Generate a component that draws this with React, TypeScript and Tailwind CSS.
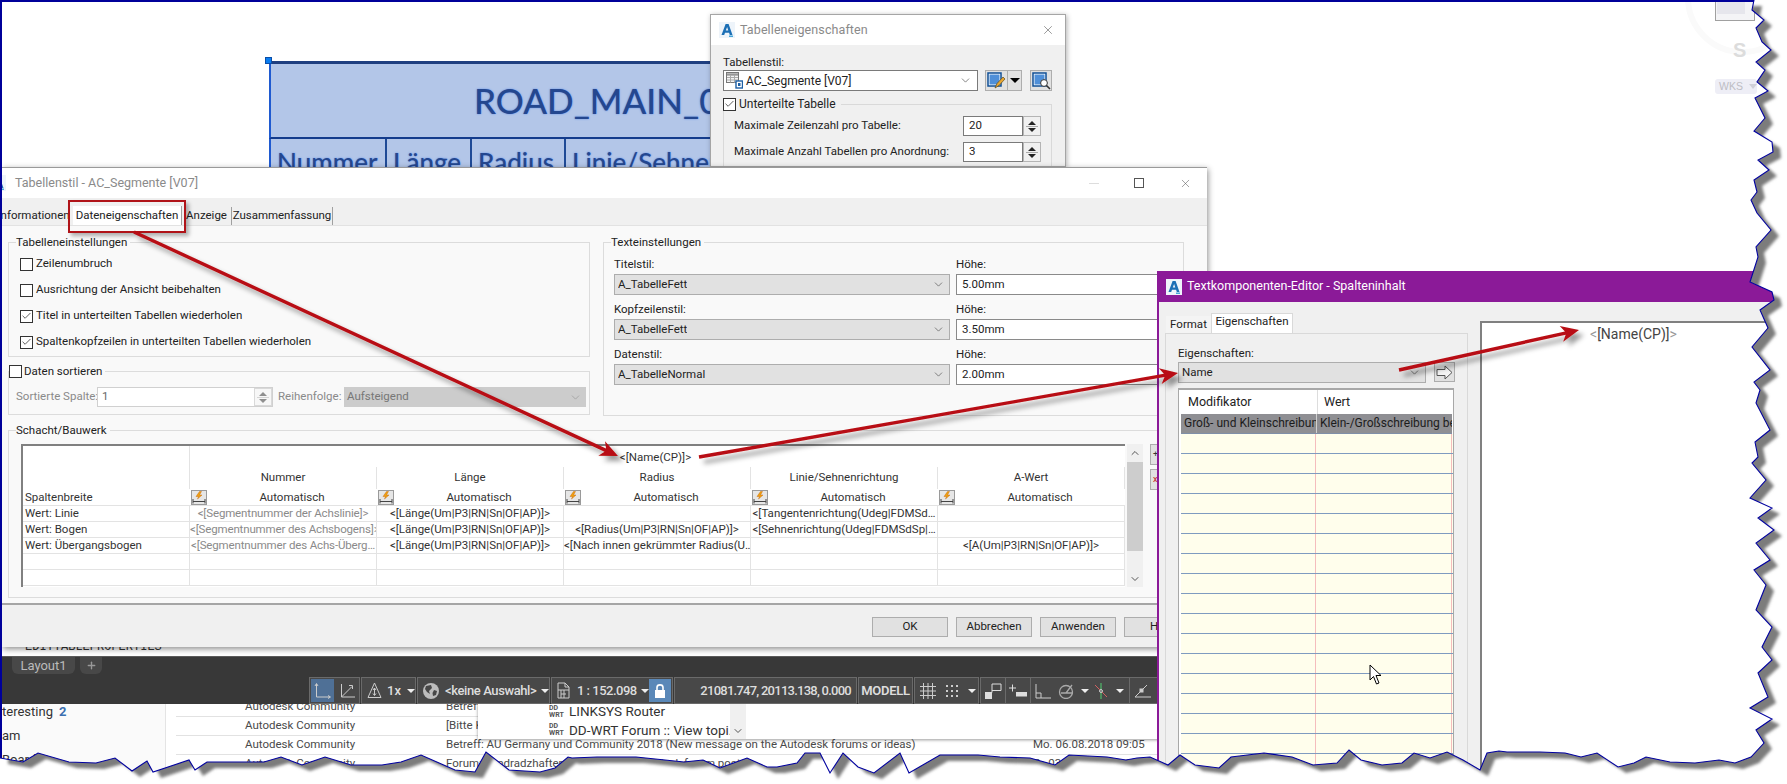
import { Check, ChevronDown, ChevronUp, Plus, X } from "lucide-react";
import type { ReactNode } from "react";

// Torn-paper edge, points read off the screenshot
const rightEdge: [number, number][] = [
  [1754, 0], [1752, 10], [1764, 20], [1756, 28], [1762, 42], [1771, 50], [1756, 62], [1765, 70], [1757, 82], [1768, 91],
  [1755, 98], [1765, 118], [1754, 131], [1772, 142], [1773, 152], [1758, 160], [1769, 170], [1754, 180], [1757, 192],
  [1751, 200], [1757, 213], [1771, 230], [1756, 247], [1758, 257], [1750, 282], [1772, 292], [1774, 300], [1760, 310],
  [1768, 328], [1752, 347], [1770, 370], [1754, 382], [1760, 390], [1756, 403], [1770, 430], [1755, 442], [1758, 457],
  [1752, 463], [1766, 480], [1750, 498], [1772, 508], [1758, 518], [1774, 530], [1756, 543], [1770, 560], [1754, 570],
  [1766, 585], [1760, 600], [1756, 610], [1772, 627], [1762, 647], [1772, 660], [1758, 673], [1768, 697], [1750, 708],
  [1772, 719], [1756, 730], [1764, 743], [1751, 757],
];

const bottomEdge: [number, number][] = [
  [1735, 763], [1719, 760], [1695, 763], [1670, 762], [1646, 757], [1634, 763], [1618, 767], [1597, 753], [1581, 757],
  [1565, 753], [1540, 752], [1507, 752], [1499, 751], [1487, 753], [1480, 770], [1463, 760], [1447, 752], [1430, 758],
  [1414, 753], [1402, 763], [1382, 765], [1361, 760], [1349, 750], [1337, 763], [1313, 765], [1292, 757], [1264, 753],
  [1231, 757], [1219, 768], [1195, 765], [1180, 755], [1168, 765], [1150, 757], [1137, 758], [1126, 760], [1107, 757],
  [1069, 755], [1055, 765], [1030, 758], [1000, 757], [978, 755], [940, 755], [909, 773], [900, 753],
  [874, 773], [858, 767], [843, 753], [830, 773], [820, 753], [805, 753], [797, 763], [777, 767], [767, 767], [747, 758],
  [720, 768], [703, 760], [684, 762], [665, 760], [636, 757], [597, 757], [572, 758], [568, 757], [555, 768], [540, 772],
  [509, 770], [486, 752], [475, 772], [455, 770], [421, 755], [401, 762], [382, 765], [351, 765], [325, 757], [302, 765],
  [281, 757], [264, 762], [237, 762], [207, 762], [195, 770], [189, 760], [153, 772], [147, 761], [132, 771], [115, 758],
  [96, 763], [69, 762], [38, 753], [23, 762], [0, 758],
];

const edge = [...rightEdge, ...bottomEdge].map(([x, y]) => `${x} ${y}`).join("L");
const paperPath = `M0 0L${edge}Z`;
const maskPath = `M0 0H1787V784H0Z${paperPath}`;

function TornEdge() {
  return (
    <svg className="absolute left-0 top-0 pointer-events-none" width="1787" height="784" viewBox="0 0 1787 784">
      <defs>
        <clipPath id="outside">
          <path d={maskPath} clipRule="evenodd" />
        </clipPath>
        <filter id="soft">
          <feGaussianBlur stdDeviation="1.6" />
        </filter>
      </defs>
      <path d={maskPath} fill="#fff" fillRule="evenodd" />
      <g clipPath="url(#outside)">
        <path d={paperPath} transform="translate(8 6)" fill="#7c7c7c" filter="url(#soft)" />
      </g>
      <path d={paperPath} fill="none" stroke="#0000a0" strokeWidth="1.1" />
      <path d="M0 1H1754M1 0V758" fill="none" stroke="#00009a" strokeWidth="2" />
    </svg>
  );
}

function arrowPath(x1: number, y1: number, x2: number, y2: number) {
  const len = Math.hypot(x2 - x1, y2 - y1);
  const ux = (x2 - x1) / len;
  const uy = (y2 - y1) / len;
  const at = (back: number, side: number) => `${x2 - ux * back - uy * side} ${y2 - uy * back + ux * side}`;
  const s = `${x1 - uy * 1.7} ${y1 + ux * 1.7}`;
  const e = `${x1 + uy * 1.7} ${y1 - ux * 1.7}`;
  return `M${s}L${at(14, 1.7)}L${at(18, 8)}L${at(0, 0)}L${at(18, -8)}L${at(14, -1.7)}L${e}Z`;
}

function Arrows() {
  return (
    <svg className="absolute left-0 top-0 pointer-events-none" width="1787" height="784" viewBox="0 0 1787 784">
      <defs>
        <filter id="arrowShadow" x="-10%" y="-10%" width="120%" height="130%">
          <feDropShadow dx="5" dy="5" stdDeviation="2.5" floodColor="#000" floodOpacity="0.4" />
        </filter>
      </defs>
      <g fill="#b80d12" filter="url(#arrowShadow)">
        <path d={arrowPath(134, 232, 618, 456)} />
        <path d={arrowPath(699, 457, 1178, 373)} />
        <path d={arrowPath(1399, 370, 1579, 330)} />
      </g>
    </svg>
  );
}

function AutodeskIcon() {
  return (
    <svg width="16" height="16" viewBox="0 0 16 16" className="shrink-0">
      <rect width="16" height="16" fill="#eef4fa" />
      <path d="M2.5 13L6.6 2H9.6L13.5 13H10.8L10.1 10.8H6L5.2 13ZM6.8 8.6H9.3L8.1 4.9Z" fill="#1c6fb5" fillRule="evenodd" />
      <rect x="10" y="13.5" width="4" height="1.5" fill="#48a6d8" />
    </svg>
  );
}

function Checkbox({ checked = false }: { checked?: boolean }) {
  return (
    <span className="flex size-[13px] shrink-0 items-center justify-center border border-[#333] bg-white">
      {checked && <Check size={12} strokeWidth={1.6} className="text-[#222]" />}
    </span>
  );
}

function GroupBox({ title, className, children }: { title?: ReactNode; className: string; children: ReactNode }) {
  return (
    <div className={`relative border border-[#dcdcdc] ${className}`}>
      {title && <div className="absolute -top-[9px] left-[7px] bg-[#f9f9f9] pr-[3px] leading-[16px]">{title}</div>}
      {children}
    </div>
  );
}

function ComboBox({ value, className }: { value: string; className: string }) {
  return (
    <div className={`flex h-[21px] items-center justify-between border border-[#adadad] bg-[#e1e1e1] pl-[3px] pr-[4px] ${className}`}>
      <span className="truncate">{value}</span>
      <ChevronDown size={13} strokeWidth={1.3} className="shrink-0 text-[#555]" />
    </div>
  );
}

function Spinner() {
  return (
    <div className="flex h-full w-[18px] flex-col items-center justify-center gap-[1px] border border-[#b4b4b4] bg-[#f0f0f0]">
      <span className="h-0 w-0 border-x-[4px] border-b-[4px] border-x-transparent border-b-[#222]" />
      <span className="h-[1px] w-[12px] bg-[#aaa]" />
      <span className="h-0 w-0 border-x-[4px] border-t-[4px] border-x-transparent border-t-[#222]" />
    </div>
  );
}

function TableIcon() {
  return (
    <svg width="17" height="17" viewBox="0 0 17 17" className="shrink-0">
      <rect x="0.5" y="0.5" width="12" height="10" fill="#f4f4f4" stroke="#777" />
      <rect x="0.5" y="0.5" width="12" height="2.5" fill="#b8b8b8" stroke="#777" />
      <path d="M4.5 3V10.5M8.5 3V10.5M1 5.5H12M1 8H12" stroke="#aaa" />
      <rect x="10" y="9" width="6.5" height="7" fill="#fff" stroke="#1c5fa5" strokeWidth="1.4" />
      <rect x="12" y="11" width="2.5" height="3" fill="#1c5fa5" />
    </svg>
  );
}

function StyleEditIcon() {
  return (
    <svg width="19" height="18" viewBox="0 0 19 18">
      <rect x="1" y="1" width="13" height="13" fill="#fff" stroke="#0f4f96" strokeWidth="1.5" />
      <rect x="2.5" y="2.5" width="10" height="10" fill="#4f8fd8" />
      <path d="M8 16L10 11.5L16 5L18 7L12 13.5Z" fill="#e8a632" stroke="#5a4a20" strokeWidth="0.7" />
    </svg>
  );
}

function StylePreviewIcon() {
  return (
    <svg width="19" height="18" viewBox="0 0 19 18">
      <rect x="1" y="1" width="13" height="13" fill="#fff" stroke="#0f4f96" strokeWidth="1.5" />
      <rect x="2.5" y="2.5" width="10" height="10" fill="#4f8fd8" />
      <circle cx="12" cy="11" r="3.4" fill="#fff" stroke="#333" />
      <path d="M14.5 13.5L18 17" stroke="#333" strokeWidth="1.6" />
    </svg>
  );
}

function WidthIcon() {
  return (
    <div className="flex h-[15px] w-[16px] shrink-0 items-center justify-center border border-[#9a9a9a] bg-[#e6e6e6]">
      <svg width="14" height="13" viewBox="0 0 14 13">
        <path d="M7.5 0.5L4 5.5H6.5L5.5 8L10 4H7.5L9.5 0.5Z" fill="#f0a010" stroke="#c05a00" strokeWidth="0.4" />
        <path d="M1 8V12.5M13 8V12.5M1 10.5H13" stroke="#444" />
      </svg>
    </div>
  );
}

function Tab({ label, active, className }: { label: string; active?: boolean; className: string }) {
  return (
    <div className={`flex h-[18px] items-center justify-center border-r border-[#a0a0a0] whitespace-nowrap ${active ? "bg-white h-[19px]" : ""} ${className}`}>
      {label}
    </div>
  );
}

const rows = [
  ["Wert: Linie", "<[Segmentnummer der Achslinie]>", "<[Länge(Um|P3|RN|Sn|OF|AP)]>", "", "<[Tangentenrichtung(Udeg|FDMSd…", ""],
  ["Wert: Bogen", "<[Segmentnummer des Achsbogens]>", "<[Länge(Um|P3|RN|Sn|OF|AP)]>", "<[Radius(Um|P3|RN|Sn|OF|AP)]>", "<[Sehnenrichtung(Udeg|FDMSdSp|…", ""],
  ["Wert: Übergangsbogen", "<[Segmentnummer des Achs-Überg…", "<[Länge(Um|P3|RN|Sn|OF|AP)]>", "<[Nach innen gekrümmter Radius(U…", "", "<[A(Um|P3|RN|Sn|OF|AP)]>"],
  ["", "", "", "", "", ""],
  ["", "", "", "", "", ""],
];

const columns = ["Nummer", "Länge", "Radius", "Linie/Sehnenrichtung", "A-Wert"];

function ColumnTable() {
  return (
    <div className="w-[1104px] border-l-2 border-t-2 border-[#808080] bg-white text-[#333]">
      <div className="flex h-[21px]">
        <div className="w-[167px] border-r border-[#e3e3e3]" />
        <div className="flex-1 pt-[3px] pr-[4px] text-center">&lt;[Name(CP)]&gt;</div>
      </div>
      <div className="grid h-[22px] grid-cols-[167px_repeat(5,187px)]">
        <div className="border-r border-[#e3e3e3]" />
        {columns.map((c) => (
          <div key={c} className="border-r border-[#e3e3e3] text-center leading-[21px]">{c}</div>
        ))}
      </div>
      <div className="grid h-[17px] grid-cols-[167px_repeat(5,187px)] border-b border-[#e3e3e3]">
        <div className="pl-[2px] leading-[16px]">Spaltenbreite</div>
        {columns.map((c) => (
          <div key={c} className="flex items-center pl-[1px]">
            <WidthIcon />
            <span className="flex-1 text-center">Automatisch</span>
          </div>
        ))}
      </div>
      {rows.map((row, i) => (
        <div key={i} className="grid h-[16px] grid-cols-[167px_repeat(5,187px)] border-b border-[#e3e3e3] leading-[15px]">
          {row.map((cell, j) => (
            <div
              key={j}
              className={`overflow-hidden whitespace-nowrap border-r border-[#e3e3e3] ${j === 0 ? "pl-[2px]" : "text-center"} ${j === 1 ? "text-[#8a8a8a] tracking-[-0.15px]" : ""}`}
            >
              {cell}
            </div>
          ))}
        </div>
      ))}
    </div>
  );
}

function MainDialog() {
  return (
    <div className="absolute left-[2px] top-[167px] flex h-[480px] w-[1205px] flex-col overflow-hidden border-t border-[#9a9a9a] bg-white shadow-[1px_2px_6px_rgba(0,0,0,0.45)]">
      <div className="flex h-[30px] shrink-0 items-center bg-white">
        <div className="-ml-[12px] mr-[9px]"><AutodeskIcon /></div>
        <span className="text-[12.5px] text-[#8a8a8a]">Tabellenstil - AC_Segmente [V07]</span>
        <div className="ml-auto flex items-center gap-[35px] pr-[15px] text-[#555]">
          <span className="h-[1px] w-[10px] bg-[#ddd]" />
          <span className="size-[10px] border border-[#555]" />
          <X size={13} strokeWidth={1} />
        </div>
      </div>

      <div className="flex h-[28px] shrink-0 items-end border-b border-[#e2e2e2] bg-[#f0f0f0] text-[#222]">
        <Tab label="Informationen" className="-ml-[4px] w-[72px]" />
        <div className="w-[3px]" />
        <Tab label="Dateneigenschaften" active className="w-[109px]" />
        <Tab label="Anzeige" className="w-[50px]" />
        <Tab label="Zusammenfassung" className="w-[101px] tracking-[-0.05px]" />
      </div>

      <div className="flex flex-1 flex-col bg-[#f9f9f9] pl-[6px] pt-[16px]">
        <div className="flex gap-[13px]">
          <div className="flex w-[582px] flex-col gap-[14px]">
            <GroupBox title="Tabelleneinstellungen" className="h-[115px] pl-[11px] pt-[8px]">
              {[
                ["Zeilenumbruch", false],
                ["Ausrichtung der Ansicht beibehalten", false],
                ["Titel in unterteilten Tabellen wiederholen", true],
                ["Spaltenkopfzeilen in unterteilten Tabellen wiederholen", true],
              ].map(([label, on]) => (
                <div key={label as string} className="flex h-[26px] items-center gap-[3px]">
                  <Checkbox checked={on as boolean} />
                  <span>{label as string}</span>
                </div>
              ))}
            </GroupBox>
            <GroupBox
              title={
                <span className="-ml-[7px] flex items-center gap-[2px]">
                  <Checkbox />
                  Daten sortieren
                </span>
              }
              className="h-[44px] pl-[7px] pt-[15px]"
            >
              <div className="flex h-[20px] items-center whitespace-nowrap text-[#8a8a8a]">
                <span className="w-[81px]">Sortierte Spalte:</span>
                <div className="flex h-full w-[176px] items-center justify-between border border-[#d0d0d0] bg-white pl-[4px] text-[#666]">
                  1
                  <div className="h-full opacity-50"><Spinner /></div>
                </div>
                <span className="ml-[5px] w-[66px]">Reihenfolge:</span>
                <div className="flex h-full w-[242px] items-center justify-between bg-[#cccccc] pl-[3px] pr-[4px] text-[#777]">
                  Aufsteigend
                  <ChevronDown size={13} strokeWidth={1.3} className="text-[#999]" />
                </div>
              </div>
            </GroupBox>
          </div>

          <GroupBox title="Texteinstellungen" className="h-[174px] w-[581px] pl-[10px] pt-[13px]">
            <div className="grid grid-cols-[342px_216px]">
              {[
                ["Titelstil:", "A_TabelleFett", "5.00mm"],
                ["Kopfzeilenstil:", "A_TabelleFett", "3.50mm"],
                ["Datenstil:", "A_TabelleNormal", "2.00mm"],
              ].map(([label, style, height]) => (
                <div key={label} className="contents">
                  <div className="h-[45px]">
                    <div className="mb-[2px] h-[16px] leading-[16px]">{label}</div>
                    <ComboBox value={style} className="w-[336px]" />
                  </div>
                  <div className="h-[45px]">
                    <div className="mb-[2px] h-[16px] leading-[16px]">Höhe:</div>
                    <div className="flex h-[21px] items-center border border-[#8a8a8a] bg-white pl-[5px]">{height}</div>
                  </div>
                </div>
              ))}
            </div>
          </GroupBox>
        </div>

        <GroupBox title="Schacht/Bauwerk" className="mt-[14px] h-[168px] w-[1190px] pl-[12px] pt-[13px]">
          <div className="flex">
            <ColumnTable />
            <div className="ml-[2px] flex h-[143px] w-[16px] flex-col items-center justify-between bg-[#f0f0f0] text-[#555]">
              <ChevronUp size={12} strokeWidth={2} className="mt-[3px]" />
              <div className="absolute top-[31px] h-[89px] w-[16px] bg-[#cdcdcd]" />
              <ChevronDown size={12} strokeWidth={2} className="mb-[2px]" />
            </div>
            <div className="ml-[7px] flex flex-col gap-[4px]">
              <div className="h-[21px] w-[20px] border border-[#adadad] bg-[#e1e1e1] pl-[2px] text-[9px] leading-[18px] text-[#333]">+</div>
              <div className="h-[21px] w-[20px] border border-[#adadad] bg-[#e1e1e1] pl-[2px] text-[9px] leading-[18px] text-[#c02020]">x</div>
            </div>
          </div>
        </GroupBox>
      </div>

      <div className="flex h-[44px] shrink-0 gap-[8px] border-t-2 border-[#a5a5a5] bg-[#f0f0f0] pl-[870px] pt-[12px]">
        {["OK", "Abbrechen", "Anwenden", "Hilfe"].map((b) => (
          <div key={b} className="flex h-[20px] w-[76px] items-center justify-center border border-[#adadad] bg-[#e1e1e1]">{b}</div>
        ))}
      </div>
    </div>
  );
}

function PropertiesDialog() {
  return (
    <div className="absolute left-[710px] top-[14px] h-[153px] w-[356px] overflow-hidden border border-[#a5a5a5] bg-[#f0f0f0] shadow-[1px_1px_5px_rgba(0,0,0,0.3)]">
      <div className="flex h-[30px] items-center bg-white pl-[8px] pr-[10px]">
        <AutodeskIcon />
        <span className="ml-[5px] text-[12.5px] tracking-[0.1px] text-[#8a8a8a]">Tabelleneigenschaften</span>
        <X size={14} strokeWidth={1} className="ml-auto text-[#555]" />
      </div>
      <div className="pl-[12px]">
        <div className="mt-[9px] h-[16px] text-[11.5px] leading-[16px]">Tabellenstil:</div>
        <div className="flex h-[21px] gap-[7px]">
          <div className="flex w-[255px] items-center border border-[#7a7a7a] bg-white pl-[2px] pr-[5px]">
            <TableIcon />
            <span className="ml-[3px] text-[12px]">AC_Segmente [V07]</span>
            <ChevronDown size={13} strokeWidth={1.3} className="ml-auto text-[#555]" />
          </div>
          <div className="flex w-[37px] items-center border border-[#adadad] bg-[#e1e1e1]">
            <div className="flex h-full w-[22px] items-center justify-center border-r border-[#adadad]"><StyleEditIcon /></div>
            <span className="ml-[2px] h-0 w-0 border-x-[5px] border-t-[5px] border-x-transparent border-t-black" />
          </div>
          <div className="ml-[1px] flex w-[22px] items-center justify-center border border-[#adadad] bg-[#e1e1e1]"><StylePreviewIcon /></div>
        </div>
        <div className="relative mt-[6px] h-[60px]">
          <div className="absolute left-0 top-[7px] h-[70px] w-[329px] border-l border-r border-t border-[#d9d9d9]" />
          <div className="relative flex w-fit items-center gap-[3px] bg-[#f0f0f0] pr-[5px] text-[12px] leading-[14px]">
            <Checkbox checked />
            Unterteilte Tabelle
          </div>
          {[
            ["Maximale Zeilenzahl pro Tabelle:", "20"],
            ["Maximale Anzahl Tabellen pro Anordnung:", "3"],
          ].map(([label, value], i) => (
            <div key={label} className={`relative flex h-[20px] items-center pl-[11px] text-[11.5px] ${i === 0 ? "mt-[5px]" : "mt-[6px]"}`}>
              <span className="w-[229px]">{label}</span>
              <div className="flex h-full w-[60px] items-center border border-[#7a7a7a] bg-white pl-[5px]">{value}</div>
              <Spinner />
            </div>
          ))}
        </div>
      </div>
    </div>
  );
}

function EditorWindow() {
  return (
    <div className="absolute left-[1157px] top-[271px] flex h-[513px] w-[630px] flex-col border-l-2 border-[#8b1a98] bg-[#f0f0f0]">
      <div className="flex h-[31px] shrink-0 items-center gap-[5px] bg-[#8b1a98] pl-[7px] text-[12.5px] text-white">
        <AutodeskIcon />
        Textkomponenten-Editor - Spalteninhalt
      </div>
      <div className="flex flex-1">
        <div className="ml-[6px] w-[303px] pt-[11px]">
          <div className="flex items-end pl-[1px]">
            <div className="flex h-[17px] w-[45px] items-center justify-center bg-[#f4f4f4]">Format</div>
            <div className="flex h-[20px] w-[82px] items-center justify-center border-x border-t border-[#d9d9d9] bg-white pb-[3px]">Eigenschaften</div>
          </div>
          <div className="h-[470px] border border-[#d9d9d9] bg-[#f0f0f0] pl-[12px] pt-[11px]">
            <div className="h-[16px] leading-[16px]">Eigenschaften:</div>
            <div className="mt-[1px] flex gap-[8px]">
              <ComboBox value="Name" className="w-[248px]" />
              <div className="flex h-[20px] w-[21px] items-center justify-center border border-[#adadad] bg-[#e1e1e1]">
                <svg width="17" height="15" viewBox="0 0 17 15">
                  <path d="M1 4.5H9V1L16 7.5L9 14V10.5H1Z" fill="#f4f4f4" stroke="#555" />
                </svg>
              </div>
            </div>
            <div className="mt-[5px] h-[400px] w-[276px] border-l border-r border-t-2 border-[#a8a8a8] bg-white pl-[2px]">
              <div className="grid h-[24px] grid-cols-[136px_1fr] items-center text-[12.5px]">
                <span className="pl-[7px]">Modifikator</span>
                <span className="border-l border-[#ddd] pl-[6px] leading-[24px]">Wert</span>
              </div>
              <div className="grid h-[20px] w-[271px] grid-cols-[135px_136px] border-b border-[#7f8fa8] bg-[#8f8f93] leading-[19px] text-[12px] text-[#1c1c1c]">
                <span className="overflow-hidden whitespace-nowrap pl-[3px] pr-[5px]">Groß- und Kleinschreibung</span>
                <span className="overflow-hidden whitespace-nowrap border-l border-[#d0d0d0] pl-[3px] pr-[5px]">Klein-/Großschreibung beibehalten</span>
              </div>
              {Array.from({ length: 17 }).map((_, i) => (
                <div key={i} className="grid h-[20px] w-[272px] grid-cols-[135px_136px_1px] border-b border-[#7f9bc0] bg-[#fffeec]">
                  <span className="border-r border-[#f5bdbd]" />
                  <span className="border-r border-[#f5bdbd]" />
                </div>
              ))}
            </div>
          </div>
        </div>
        <div className="ml-[12px] mt-[19px] flex-1 border-l-2 border-t-2 border-[#808080] bg-white pl-[108px] pt-[1px] text-[14px] text-[#444]">
          <span className="text-[#999]">&lt;</span>[Name(CP)]<span className="text-[#999]">&gt;</span>
        </div>
      </div>
      <svg className="absolute left-[210px] top-[393px]" width="14" height="22" viewBox="0 0 14 22">
        <path d="M1 1V16L4.5 12.5L7.5 20L10 19L7 11.5H12Z" fill="#fff" stroke="#000" strokeWidth="1" />
      </svg>
    </div>
  );
}

function Group({ w, children, className = "" }: { w: string; children?: ReactNode; className?: string }) {
  return <div className={`flex h-full shrink-0 items-center border border-[#6a6a6a] bg-[#484848] ${w} ${className}`}>{children}</div>;
}

function Caret() {
  return <span className="block h-0 w-0 shrink-0 border-x-[4px] border-t-[4px] border-x-transparent border-t-[#eee]" />;
}

function StatusBar() {
  return (
    <div className="absolute left-0 top-[656px] h-[48px] w-[1160px] border-t border-[#5a5a5a] bg-[#383838] text-[13px] font-medium text-[#ddd]">
      <div className="flex h-[20px] items-start pl-[12px] text-[#bbb]">
        <div className="flex h-[17px] w-[63px] items-center justify-center rounded-b-md bg-[#484848] text-[13px] font-normal">Layout1</div>
        <div className="ml-[5px] flex h-[17px] w-[22px] items-center justify-center rounded-b-md bg-[#484848]"><Plus size={11} strokeWidth={3} className="text-[#999]" /></div>
      </div>
      <div className="flex h-[27px] gap-[1px] pl-[309px]">
        <Group w="w-[51px]" className="gap-[3px] pl-[1px]">
          <div className="flex h-[23px] w-[23px] items-center justify-center bg-[#4f7096]">
            <svg width="17" height="17" viewBox="0 0 17 17" fill="none" stroke="#ccc"><path d="M2.5 2V15H16" /><path d="M1 4L2.5 1.5L4 4M14 13.5L16.5 15L14 16.5" /></svg>
          </div>
          <svg className="ml-[2px] shrink-0" width="17" height="17" viewBox="0 0 17 17" fill="none" stroke="#ccc"><path d="M2.5 2V15H16M2.5 15L13 4.5" /><path d="M10 3.5L13.5 3.5V7" /></svg>
        </Group>
        <Group w="w-[55px]" className="pl-[5px]">
          <svg className="shrink-0" width="15" height="18" viewBox="0 0 15 18" fill="none" stroke="#ccc"><path d="M7.5 1L14 15.5H1Z" /><path d="M7.5 6V13M6 8L7.5 6L9 8M6 11.5L7.5 13.5L9 11.5" /></svg>
          <span className="ml-[5px] mr-[6px]">1x</span>
          <Caret />
        </Group>
        <Group w="w-[133px]" className="pl-[5px]">
          <svg className="shrink-0" width="16" height="16" viewBox="0 0 16 16"><circle cx="8" cy="8" r="8" fill="#bdbdbd" /><path d="M3 3L8 2L9 5L6 8L7 11L4 9L2 6ZM11 7L14 8L13 12L10 13L9.5 10Z" fill="#484848" /></svg>
          <span className="ml-[6px] mr-[5px] whitespace-nowrap tracking-[-0.4px]">&lt;keine Auswahl&gt;</span>
          <Caret />
        </Group>
        <Group w="w-[122px]" className="pl-[5px]">
          <svg className="shrink-0" width="14" height="18" viewBox="0 0 14 18" fill="none" stroke="#ccc"><path d="M1 1H8L12 5V16H1ZM8 1V5H12M1 8H12M4 8V16M4 12H9M7 8V16" /></svg>
          <span className="ml-[6px] mr-[4px] whitespace-nowrap tracking-[-0.5px]">1 : 152.098</span>
          <Caret />
          <div className="ml-auto mr-[1px] flex h-[23px] w-[22px] items-center justify-center bg-[#5a88b8]">
            <svg width="12" height="15" viewBox="0 0 12 15"><path d="M3 7V4.5C3 1 9 1 9 4.5V7" fill="none" stroke="#fff" strokeWidth="1.6" /><rect x="1" y="7" width="10" height="8" fill="#fff" /></svg>
          </div>
        </Group>
        <Group w="w-[183px]" className="justify-end pr-[5px]"><span className="whitespace-nowrap tracking-[-0.75px]">21081.747, 20113.138, 0.000</span></Group>
        <Group w="w-[55px]" className="justify-center font-semibold"><span className="tracking-[-0.3px]">MODELL</span></Group>
        <Group w="w-[65px]" className="pl-[5px]">
          <svg className="shrink-0" width="16" height="16" viewBox="0 0 16 16" stroke="#ccc"><path d="M0 3.5H16M0 8H16M0 12.5H16M3.5 0V16M8 0V16M12.5 0V16" /></svg>
          <svg className="ml-[9px] shrink-0" width="14" height="14" viewBox="0 0 14 14" fill="#ccc"><path d="M1 1h2v2h-2zM6 1h2v2h-2zM11 1h2v2h-2zM1 6h2v2h-2zM6 6h2v2h-2zM11 6h2v2h-2zM1 11h2v2h-2zM6 11h2v2h-2zM11 11h2v2h-2z" /></svg>
          <span className="ml-[9px]"><Caret /></span>
        </Group>
        <Group w="w-[178px]">
          <div className="flex h-full w-[25px] shrink-0 items-center justify-center border-r border-[#6a6a6a]">
            <svg width="18" height="18" viewBox="0 0 18 18"><rect x="1" y="10" width="7" height="7" fill="#ddd" /><path d="M8 10.5V2H17V8.5H8" fill="none" stroke="#ddd" /></svg>
          </div>
          <div className="flex h-full w-[25px] shrink-0 items-center justify-center border-r border-[#6a6a6a]">
            <svg width="19" height="14" viewBox="0 0 19 14"><path d="M0 4H7M3.5 0.5V7.5" stroke="#ddd" /><rect x="7" y="8" width="11" height="4.5" fill="#ddd" /></svg>
          </div>
          <svg className="ml-[4px] shrink-0" width="16" height="16" viewBox="0 0 16 16" fill="none" stroke="#ccc"><path d="M1 1V15H16M1 10H6V15" /></svg>
          <svg className="ml-[7px] shrink-0" width="18" height="16" viewBox="0 0 18 16" fill="none" stroke="#aaa" strokeWidth="1.3"><circle cx="8" cy="9" r="6.5" /><path d="M3 10H15M8 10L14 2" /></svg>
          <span className="ml-[5px]"><Caret /></span>
          <svg className="ml-[5px] shrink-0" width="14" height="16" viewBox="0 0 14 16"><path d="M1 2L13 14" stroke="#d06060" /><path d="M7 0V16" stroke="#50d070" /><circle cx="7" cy="8" r="1.4" fill="#484848" stroke="#ddd" /></svg>
          <span className="ml-[8px]"><Caret /></span>
          <span className="ml-[5px] mr-[4px] h-full w-[1px] shrink-0 bg-[#6a6a6a]" />
          <svg className="shrink-0" width="17" height="14" viewBox="0 0 17 14" fill="none" stroke="#ccc"><path d="M1 13H17M1 13L13 1" /><rect x="6" y="5" width="3" height="3" fill="#ccc" /></svg>
        </Group>
      </div>
    </div>
  );
}

function WebPage() {
  const items = [
    ["Betreff", ""],
    ["[Bitte Kenn", ""],
    ["Betreff: AU Germany und Community 2018 (New message on the Autodesk forums or ideas)", "Mo. 06.08.2018 09:05"],
    ["Forum: Landradzhaften wurden geändert desk forum post", "Fr. 03.08.2018 14:11"],
  ];
  return (
    <div className="absolute left-0 top-[704px] flex h-[80px] w-[1160px] overflow-hidden bg-white text-[11.5px] text-[#4a4a4a]">
      <div className="relative w-[166px] shrink-0 border-r border-[#e4e4e4] bg-[#fafafa] text-[13px] text-[#333]">
        <div className="absolute left-[2px] top-[-2px] flex gap-[6px]"><span>teresting</span><span className="font-bold text-[#3b6fb0]">2</span></div>
        <div className="absolute left-[2px] top-[22px]">am</div>
        <div className="absolute left-[2px] top-[46px]">Board <span className="font-bold text-[#3b6fb0]">1</span></div>
      </div>
      <div className="ml-[10px] -mt-[6px] flex-1">
        {items.map(([subject, date], i) => (
          <div key={i} className="flex h-[19px] items-center border-b border-[#e2e2e2]">
            <span className="ml-[69px] w-[201px] shrink-0 whitespace-nowrap">Autodesk Community</span>
            <span className="w-[587px] shrink-0 overflow-hidden whitespace-nowrap">{subject}</span>
            <span className="whitespace-nowrap">{date}</span>
          </div>
        ))}
      </div>
      <div className="absolute left-[478px] top-0 h-[35px] w-[682px] bg-white text-[13.5px] text-[#333] shadow-[0_1px_3px_rgba(0,0,0,0.4)]">
        <div className="flex h-full">
          <div className="w-[252px] overflow-hidden pl-[91px]">
            {["LINKSYS Router", "DD-WRT Forum :: View topi..."].map((t) => (
              <div key={t} className="relative flex h-[22px] items-center whitespace-nowrap first:h-[15px]">
                <span className="absolute -left-[20px] text-[7px] font-bold leading-[7px] text-[#555]">DD<br />WRT</span>
                {t}
              </div>
            ))}
          </div>
          <div className="flex w-[16px] items-end justify-center bg-[#f0f0f0] pb-[2px]"><ChevronDown size={12} strokeWidth={2} className="text-[#555]" /></div>
        </div>
      </div>
    </div>
  );
}

function CadTable() {
  return (
    <div className="absolute left-[269px] top-[61px] w-[480px] font-['Lato'] font-medium text-[#24478f] [text-shadow:0_0_2px_#5a8ae8]">
      <span className="absolute -left-[4px] -top-[4px] size-[7px] border border-[#0a4ea8] bg-[#0a7cf0]" />
      <div className="flex h-[78px] items-center border-x-2 border-b-2 border-t-[3px] border-x-[#1f5ad0] border-b-[#143c8c] border-t-[#1f3f80] bg-[#b3c6e8] pl-[203px] text-[35px]">ROAD_MAIN_0</div>
      <div className="flex h-[40px] border-l-2 border-[#1f5ad0] bg-[#b3c6e8] text-[26px] leading-[40px]">
        <div className="w-[116px] shrink-0 border-r-2 border-[#1f4a96] pl-[6px] pt-[3px]">Nummer</div>
        <div className="w-[85px] shrink-0 border-r-2 border-[#1f4a96] pl-[6px] pt-[3px]">Länge</div>
        <div className="w-[94px] shrink-0 border-r-2 border-[#1f4a96] pl-[6px] pt-[3px]">Radius</div>
        <div className="flex-1 whitespace-nowrap pl-[6px] pt-[3px]">Linie/Sehnenrichtung</div>
      </div>
    </div>
  );
}

function ViewCube() {
  return (
    <div className="absolute left-[1660px] top-0 h-[100px] w-[127px] text-[#bdbdc4]">
      <div className="absolute left-[25px] top-[-60px] size-[115px] rounded-full border-[6px] border-[#fafafa]" />
      <div className="absolute left-[55px] top-0 h-[21px] w-[40px] border border-[#a0a0a0] bg-[#f4f4f6] p-[1px]"><div className="h-[12px] w-[28px] bg-[#e6e6ec]" /></div>
      <div className="absolute left-[73px] top-[38px] text-[20px] font-bold leading-[24px] text-[#dcdcdc] font-['Liberation_Sans']">S</div>
      <div className="absolute left-[55px] top-[79px] flex h-[15px] w-[42px] items-center gap-[6px] rounded-[3px] bg-[#eeeef6] pl-[4px] font-['Liberation_Sans'] text-[10.5px]">
        WKS
        <span className="h-0 w-0 border-x-[4px] border-t-[5px] border-x-transparent border-t-[#d0d0d8]" />
      </div>
    </div>
  );
}

export default function App() {
  return (
    <div className="relative h-[784px] w-[1787px] overflow-hidden bg-white font-['Roboto',sans-serif] text-[11.5px] text-[#222]">
      <ViewCube />
      <CadTable />
      <PropertiesDialog />
      <div className="absolute left-[25px] top-[638px] font-['Liberation_Mono'] text-[12px] text-[#333]">EDITTABLEPROPERTIES</div>
      <WebPage />
      <StatusBar />
      <MainDialog />
      <div className="absolute left-[68px] top-[200px] h-[33px] w-[118px] border-2 border-[#b01318] shadow-[3px_3px_4px_rgba(0,0,0,0.3)]" />
      <EditorWindow />
      <Arrows />
      <TornEdge />
    </div>
  );
}
